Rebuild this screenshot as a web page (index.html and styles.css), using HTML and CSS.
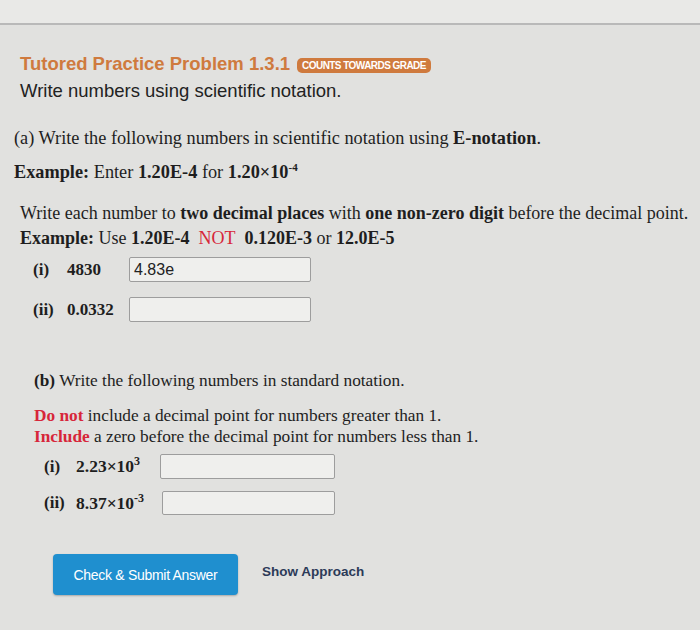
FILE: index.html
```html
<!DOCTYPE html>
<html>
<head>
<meta charset="utf-8">
<link rel="stylesheet" href="styles.css">
</head>
<body>
<div class="topbar"></div>
<div class="page">
  <div class="header">
    <div class="title-row">
      <span class="title">Tutored Practice Problem 1.3.1</span>
      <span class="badge">COUNTS TOWARDS GRADE</span>
    </div>
    <div class="subtitle">Write numbers using scientific notation.</div>
  </div>

  <div class="part-a">
    <p class="line">(a) Write the following numbers in scientific notation using <b>E-notation</b>.</p>
    <p class="line ex"><b>Example:</b> Enter <b>1.20E-4</b> for <b>1.20×10<sup>-4</sup></b></p>
  </div>

  <div class="part-a2">
    <p class="line">Write each number to <b>two decimal places</b> with <b>one non-zero digit</b> before the decimal point.</p>
    <p class="line"><b>Example:</b> Use <b>1.20E-4</b> &nbsp;<span class="red">NOT</span>&nbsp; <b>0.120E-3</b> or <b>12.0E-5</b></p>
    <div class="qrow q1">
      <span class="qidx">(i)</span><span class="qnum n1">4830</span>
      <div class="input filled">4.83e</div>
    </div>
    <div class="qrow q2">
      <span class="qidx">(ii)</span><span class="qnum n1">0.0332</span>
      <div class="input"></div>
    </div>
  </div>

  <div class="part-b">
    <p class="line"><b>(b)</b> Write the following numbers in standard notation.</p>
    <p class="line tight gap"><b class="red">Do not</b> include a decimal point for numbers greater than 1.</p>
    <p class="line tight"><b class="red">Include</b> a zero before the decimal point for numbers less than 1.</p>
    <div class="qrow q3">
      <span class="qidx">(i)</span><span class="qnum n2">2.23×10<sup>3</sup></span>
      <div class="input small"></div>
    </div>
    <div class="qrow q4">
      <span class="qidx">(ii)</span><span class="qnum n2">8.37×10<sup>-3</sup></span>
      <div class="input small s2"></div>
    </div>
  </div>

  <div class="actions">
    <button class="submit">Check &amp; Submit Answer</button>
    <span class="approach">Show Approach</span>
  </div>
</div>
</body>
</html>
```

FILE: styles.css
```css
html, body {
  margin: 0;
  padding: 0;
}
body {
  background: #e1e1df;
  width: 700px;
  height: 630px;
  overflow: hidden;
  font-family: "Liberation Serif", "Times New Roman", serif;
  color: #1e1e1e;
}
.topbar {
  height: 23px;
  background: #e9e9e7;
  border-bottom: 2px solid #b9b9b9;
}
.page {
  padding: 28px 0 0 0;
}
.header {
  padding-left: 20px;
  font-family: "Liberation Sans", Arial, sans-serif;
}
.title-row {
  display: flex;
  align-items: center;
  gap: 7px;
  height: 22px;
}
.title {
  color: #cf7a3e;
  font-weight: bold;
  font-size: 18.5px;
}
.badge {
  background: #cf7a3e;
  color: #fff;
  font-family: "Liberation Sans", Arial, sans-serif;
  font-weight: bold;
  font-size: 10px;
  letter-spacing: -0.55px;
  line-height: 13px;
  padding: 1px 5px;
  border-radius: 5px;
  margin-top: 3px;
}
.subtitle {
  font-size: 18.5px;
  line-height: 21px;
  color: #222;
  margin-top: 5px;
}
.line {
  margin: 0;
  font-size: 18px;
  line-height: 24px;
}
.part-a .line { font-size: 18.3px; }
.line b { font-weight: bold; }
sup { font-size: 11px; line-height: 0; vertical-align: 7px; }
.part-a {
  padding-left: 14px;
  margin-top: 25px;
}
.part-a .ex { margin-top: 10px; }
.part-a2 {
  padding-left: 20px;
  margin-top: 17px;
}
.part-a2 .line { line-height: 25px; }
.qrow {
  display: flex;
  align-items: center;
  font-weight: bold;
  font-size: 17px;
}
.qidx { display: inline-block; }
.q1, .q2 { padding-left: 13px; }
.q1 { margin-top: 6px; }
.q2 { margin-top: 15px; }
.q1 .qidx, .q2 .qidx { width: 34px; }
.n1 { width: 62px; }
.input {
  width: 182px;
  height: 25px;
  background: #efefed;
  border: 1px solid #9d9d9d;
  border-radius: 2px;
  box-sizing: border-box;
  font-family: "Liberation Sans", Arial, sans-serif;
  font-weight: normal;
  font-size: 16px;
  line-height: 23px;
  padding-left: 4px;
  color: #222;
}
.input.small { width: 175px; }
.input.s2 { height: 24px; margin-left: 2px; width: 173px; }
.part-b {
  padding-left: 34px;
  margin-top: 47px;
}
.part-b .line { font-size: 17.3px; }
.part-b .tight { line-height: 21px; }
.part-b .gap { margin-top: 12px; }
.q3, .q4 { padding-left: 10px; }
.q3 { margin-top: 7px; }
.q4 { margin-top: 12px; }
.q3 .qidx, .q4 .qidx { width: 32px; }
.n2 { width: 84px; font-size: 17.5px; }
.n2 sup { font-size: 12px; }
.actions {
  display: flex;
  align-items: center;
  padding-left: 53px;
  margin-top: 39px;
  gap: 24px;
}
.submit {
  width: 185px;
  height: 41px;
  background: #1f8fcf;
  border: none;
  border-radius: 4px;
  color: #fff;
  font-family: "Liberation Sans", Arial, sans-serif;
  font-size: 14px;
  letter-spacing: -0.3px;
  box-shadow: 0 1px 2px rgba(0,0,0,0.25);
}
.approach {
  font-family: "Liberation Sans", Arial, sans-serif;
  font-weight: bold;
  font-size: 13.5px;
  color: #2c3a58;
  margin-top: -6px;
}
.red { color: #d7263a; }
```
